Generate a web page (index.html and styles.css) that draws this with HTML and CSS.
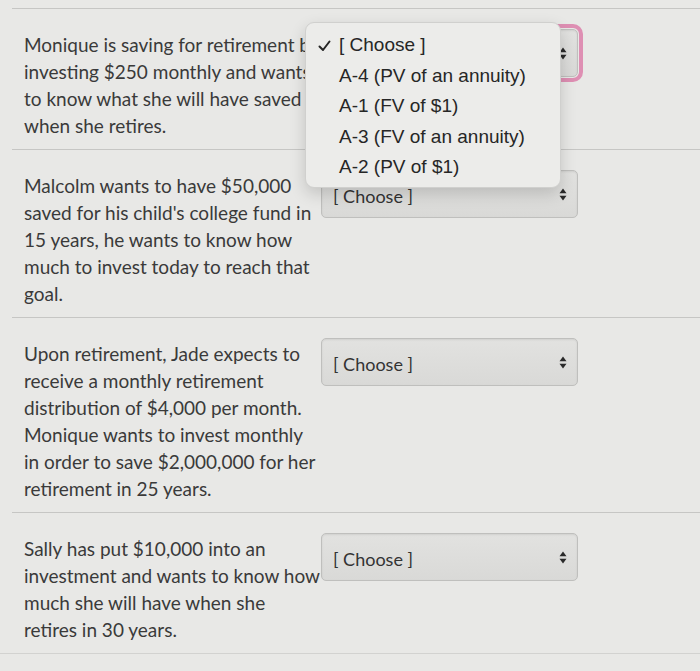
FILE: index.html
```html
<!DOCTYPE html>
<html>
<head>
    <meta charset="utf-8">
    <title>Matching Question</title>
    <link rel="stylesheet" href="styles.css">
</head>
<body>
<div class="question">

    <div class="match-row">
        <div class="prompt">Monique is saving for retirement by investing $250 monthly and wants to know what she will have saved when she retires.</div>
        <div class="select-wrap">
            <div class="select is-focused">
                <span class="select-label">[ Choose ]</span>
                <svg class="select-arrows" width="8" height="13" viewBox="0 0 8 13"><path d="M4 0.5 L7.5 5.2 H0.5 Z M4 12.5 L7.5 7.8 H0.5 Z"/></svg>
            </div>
            <ul class="menu">
                <li class="checked">
                    <svg class="check" width="13" height="12" viewBox="0 0 13 12"><path d="M1.5 6.5 L5 10 L11.5 1.5"/></svg>
                    [ Choose ]
                </li>
                <li>A-4 (PV of an annuity)</li>
                <li>A-1 (FV of $1)</li>
                <li>A-3 (FV of an annuity)</li>
                <li>A-2 (PV of $1)</li>
            </ul>
        </div>
    </div>

    <div class="match-row">
        <div class="prompt">Malcolm wants to have $50,000 saved for his child's college fund in 15 years, he wants to know how much to invest today to reach that goal.</div>
        <div class="select-wrap">
            <div class="select">
                <span class="select-label">[ Choose ]</span>
                <svg class="select-arrows" width="8" height="13" viewBox="0 0 8 13"><path d="M4 0.5 L7.5 5.2 H0.5 Z M4 12.5 L7.5 7.8 H0.5 Z"/></svg>
            </div>
        </div>
    </div>

    <div class="match-row">
        <div class="prompt">Upon retirement, Jade expects to receive a monthly retirement distribution of $4,000 per month. Monique wants to invest monthly in order to save $2,000,000 for her retirement in 25 years.</div>
        <div class="select-wrap">
            <div class="select">
                <span class="select-label">[ Choose ]</span>
                <svg class="select-arrows" width="8" height="13" viewBox="0 0 8 13"><path d="M4 0.5 L7.5 5.2 H0.5 Z M4 12.5 L7.5 7.8 H0.5 Z"/></svg>
            </div>
        </div>
    </div>

    <div class="match-row">
        <div class="prompt">Sally has put $10,000 into an investment and wants to know how much she will have when she retires in 30 years.</div>
        <div class="select-wrap">
            <div class="select">
                <span class="select-label">[ Choose ]</span>
                <svg class="select-arrows" width="8" height="13" viewBox="0 0 8 13"><path d="M4 0.5 L7.5 5.2 H0.5 Z M4 12.5 L7.5 7.8 H0.5 Z"/></svg>
            </div>
        </div>
    </div>

</div>
</body>
</html>
```

FILE: styles.css
```css
body {
    font-family: Lato, 'Open Sans', sans-serif;
    background-color: #e8e8e6;
    color: #3a3a3a;
    margin: 0;
}

.question {
    padding: 8px 0 0 12px;
    border-bottom: 1px solid #d2d2d0;
}

.match-row {
    display: flex;
    align-items: flex-start;
    border-top: 1px solid #c6c6c4;
    padding: 20px 0 10px 12px;
}

.prompt {
    width: 297px;
    margin-top: 2px;
    font-size: 19px;
    line-height: 27px;
}

.select-wrap {
    position: relative;
}

.select {
    width: 257px;
    height: 48px;
    box-sizing: border-box;
    display: flex;
    align-items: center;
    justify-content: space-between;
    padding: 0 10px 0 11px;
    border: 1px solid #bfbfbd;
    border-radius: 5px;
    background: linear-gradient(#e2e2e0, #d9d9d7);
    box-shadow: inset 0 1px 2px rgba(0, 0, 0, 0.08);
    font-size: 18px;
    color: #333;
}

.select-label {
    padding-top: 4px;
}

.select-arrows {
    fill: #2a2a2a;
}

.is-focused {
    outline: 4px solid #de8fb3;
    outline-offset: 1px;
}

/* native option popup left open over the first row */
.menu {
    position: absolute;
    z-index: 10;
    left: -16px;
    top: -7px;
    width: 256px;
    box-sizing: border-box;
    margin: 0;
    padding: 7px 0 4px;
    list-style: none;
    background-color: #ececea;
    border: 1px solid #d0d0ce;
    border-radius: 9px;
    box-shadow: 0 6px 16px rgba(0, 0, 0, 0.16);
    font-family: 'Liberation Sans', Arial, sans-serif;
    font-size: 19px;
    color: #262626;
}

.menu li {
    position: relative;
    height: 30.5px;
    line-height: 30px;
    padding-left: 33px;
}

.check {
    position: absolute;
    left: 12px;
    top: 10px;
    fill: none;
    stroke: #262626;
    stroke-width: 2;
    stroke-linecap: round;
    stroke-linejoin: round;
}
```
